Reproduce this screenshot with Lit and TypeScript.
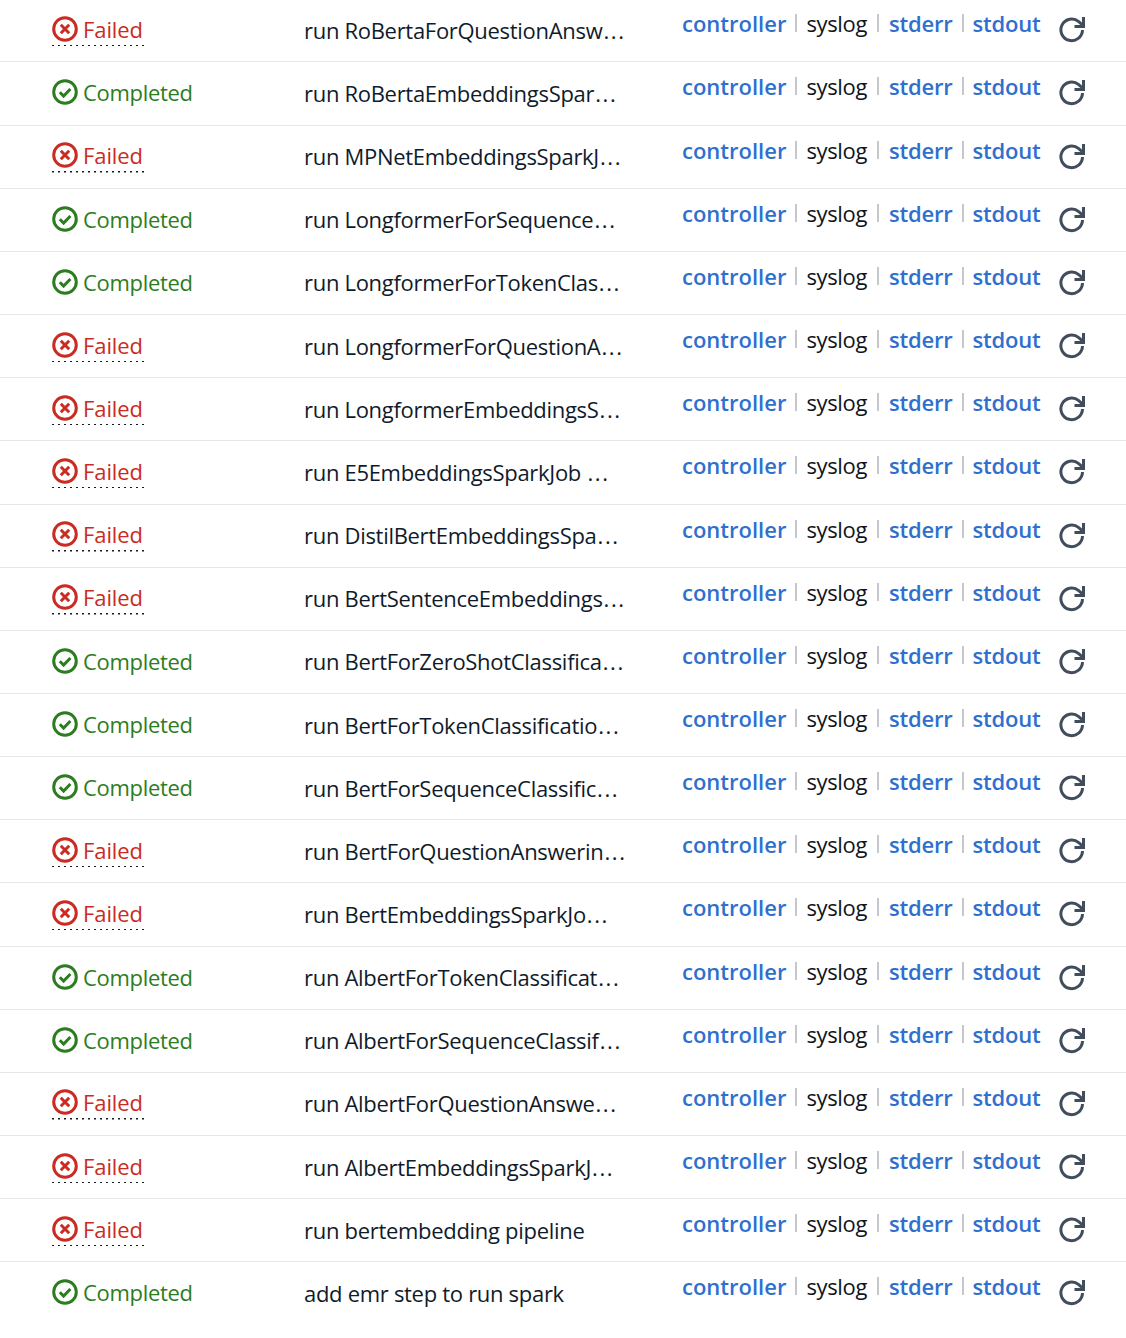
import { LitElement, html, css } from "lit";
import { customElement } from "lit/decorators.js";

type Step = [boolean, string, boolean?];

const steps: Step[] = [
  [false, "run RoBertaForQuestionAnsw", true],
  [true, "run RoBertaEmbeddingsSpar", true],
  [false, "run MPNetEmbeddingsSparkJ", true],
  [true, "run LongformerForSequence", true],
  [true, "run LongformerForTokenClas", true],
  [false, "run LongformerForQuestionA", true],
  [false, "run LongformerEmbeddingsS", true],
  [false, "run E5EmbeddingsSparkJob ", true],
  [false, "run DistilBertEmbeddingsSpa", true],
  [false, "run BertSentenceEmbeddings", true],
  [true, "run BertForZeroShotClassifica", true],
  [true, "run BertForTokenClassificatio", true],
  [true, "run BertForSequenceClassific", true],
  [false, "run BertForQuestionAnswerin", true],
  [false, "run BertEmbeddingsSparkJo", true],
  [true, "run AlbertForTokenClassificat", true],
  [true, "run AlbertForSequenceClassif", true],
  [false, "run AlbertForQuestionAnswe", true],
  [false, "run AlbertEmbeddingsSparkJ", true],
  [false, "run bertembedding pipeline"],
  [true, "add emr step to run spark"],
];

@customElement("app-root")
export class AppRoot extends LitElement {
  static styles = css`
    :host {
      display: block;
      height: 1338px;
      background: #fff;
      font-family: "Open Sans", "Noto Sans", sans-serif;
      font-size: 22px;
      letter-spacing: -0.3px;
      color: #0f1b2a;
      overflow: hidden;
    }

    .row {
      display: grid;
      grid-template-columns: 252px 378px 1fr;
      height: 63.16px;
      box-sizing: border-box;
      border-bottom: 1px solid #e6e8e8;
      padding-left: 52px;
    }

    .row:first-child {
      height: 63.04px;
      margin-top: -0.6px;
    }

    .row:last-child {
      border-bottom: none;
    }

    .status {
      height: 30px;
      margin-top: 15px;
    }

    .status.failed {
      color: #ca2b22;
      margin-top: 14px;
    }

    .status.done {
      color: #2c7d20;
    }

    .status-inner {
      display: inline-flex;
      align-items: center;
      gap: 5px;
      height: 30px;
    }

    .failed .status-inner {
      padding: 0 2px 2px 0;
      background: repeating-linear-gradient(90deg, #16191f 0 2px, transparent 2px 6px) left bottom / 100% 1.5px no-repeat;
      height: 31px;
      letter-spacing: -0.1px;
    }

    .title {
      height: 30px;
      line-height: 30px;
      margin-top: 15.5px;
      white-space: pre;
    }

    .dots {
      letter-spacing: 1.6px;
      margin-left: 1px;
    }

    .links {
      display: flex;
      align-items: flex-start;
      height: 46px;
      line-height: 30px;
      margin-top: 9px;
      font-weight: 600;
      letter-spacing: -0.2px;
      color: #2f6fce;
    }

    .controller {
      letter-spacing: 0;
    }

    .sep {
      width: 2px;
      height: 18px;
      background: #c6c6cd;
      margin: 6px 10px 0;
    }

    .sep.narrow {
      margin: 6px 9px 0;
    }

    .plain {
      font-weight: 400;
      letter-spacing: -0.35px;
      color: #0f141a;
    }

    .refresh {
      margin-left: 17px;
      margin-top: 7px;
      display: block;
    }
  `;

  render() {
    return html`${steps.map(
      ([ok, title, cut]) => html`
        <div class="row">
          <div class="status ${ok ? "done" : "failed"}">
            <span class="status-inner">
              ${ok ? this.okIcon() : this.failIcon()}
              <span>${ok ? "Completed" : "Failed"}</span>
            </span>
          </div>
          <div class="title">${title}${cut ? html`<span class="dots">...</span>` : ""}</div>
          <div class="links">
            <span class="controller">controller</span><i class="sep narrow"></i>
            <span class="plain">syslog</span><i class="sep"></i>
            <span>stderr</span><i class="sep narrow"></i>
            <span>stdout</span>
            ${this.refreshIcon()}
          </div>
        </div>
      `
    )}`;
  }

  okIcon() {
    return html`<svg width="26" height="26" viewBox="0 0 26 26" fill="none" stroke="currentColor" stroke-width="3">
      <circle cx="13" cy="13" r="11.3"></circle>
      <path d="M7.8 13.2l3.8 3.8 6.8-7"></path>
    </svg>`;
  }

  failIcon() {
    return html`<svg width="26" height="26" viewBox="0 0 26 26" fill="none" stroke="currentColor" stroke-width="3">
      <circle cx="13" cy="13" r="11.3"></circle>
      <path d="M8.8 8.8l8.4 8.4M17.2 8.8l-8.4 8.4"></path>
    </svg>`;
  }

  refreshIcon() {
    return html`<svg class="refresh" width="28" height="28" viewBox="0 0 28 28" fill="none" stroke="#414d5c" stroke-width="3">
      <path d="M24.5 15a10.8 10.8 0 1 1-3.8-8.4l3.4 3"></path>
      <path d="M25.5 2v9.5h-9"></path>
    </svg>`;
  }
}
